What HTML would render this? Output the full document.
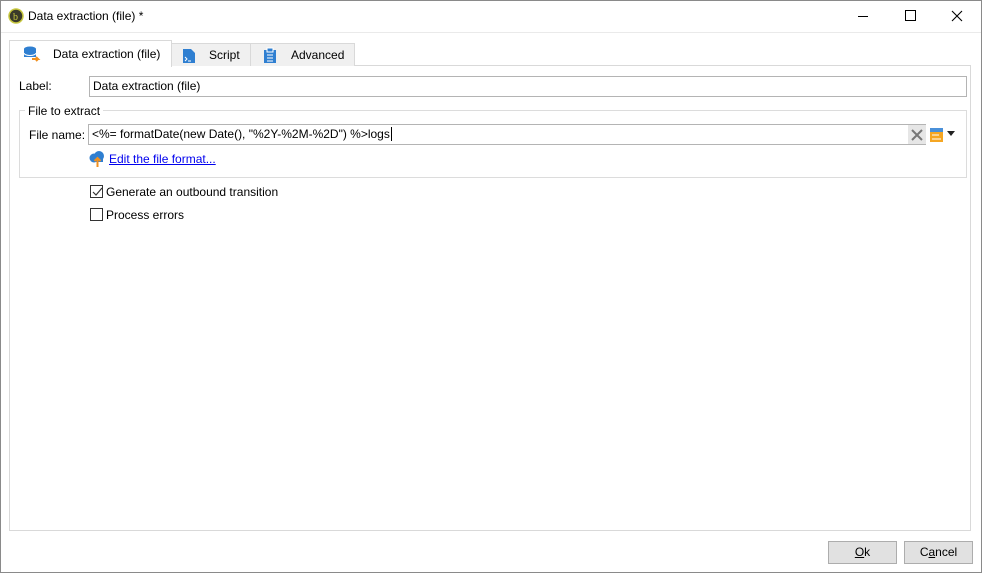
<!DOCTYPE html>
<html><head><meta charset="utf-8"><style>
*{margin:0;padding:0;box-sizing:border-box}
body{width:982px;height:573px;background:#fff;font-family:"Liberation Sans",Arial,sans-serif;font-size:12px;color:#000;position:relative;overflow:hidden}
.abs{position:absolute}
.win{left:0;top:0;width:982px;height:573px;border:1px solid #8a8a8a;border-top-color:#8a8a8a}
.title{left:28px;top:9px;font-size:12px}
.sep{left:1px;top:32px;width:980px;height:1px;background:#eaeaea}
.panel{left:9px;top:65px;width:962px;height:466px;border:1px solid #d9d9d9;background:#fff}
.tab{top:43px;height:23px;background:#f0f0f0;border:1px solid #d9d9d9;border-bottom:none;font-size:12px;line-height:21px}
.tab.act{top:40px;height:27px;background:#fff;z-index:2}
.inp{height:21px;border:1px solid #b4b4b4;background:#fff;line-height:19px;padding-left:3px}
.group{left:19px;top:110px;width:948px;height:68px;border:1px solid #dcdcdc}
.cb{width:13px;height:13px;border:1px solid #333;background:#fff}
.btn{top:541px;height:23px;width:69px;background:#e1e1e1;border:1px solid #adadad;text-align:center;line-height:21px}
</style></head><body>
<div class="abs win"></div>
<svg class="abs" style="left:8px;top:8px" width="16" height="16"><circle cx="8" cy="8" r="7" fill="#3a3a2a" stroke="#c8c840" stroke-width="1.5"/><text x="5" y="12" font-size="10" fill="#c8c840" font-family="Liberation Serif">b</text></svg>
<div class="abs title">Data extraction (file) *</div>
<div class="abs" style="left:858px;top:16px;width:10px;height:1px;background:#000"></div>
<div class="abs" style="left:905px;top:10px;width:11px;height:11px;border:1px solid #000"></div>
<svg class="abs" style="left:951px;top:10px" width="12" height="12"><path d="M1 1L11 11M11 1L1 11" stroke="#000" stroke-width="1.1"/></svg>
<div class="abs sep"></div>
<div class="abs panel"></div>
<div class="abs tab act" style="left:9px;width:163px;">
<svg class="abs" style="left:13px;top:4px" width="18" height="18"><ellipse cx="7" cy="4" rx="6" ry="2.5" fill="#2f7fd1"/><rect x="1" y="4" width="12" height="8" fill="#2f7fd1"/><path d="M1 8a6 2.5 0 0 0 12 0" stroke="#fff" fill="none"/><path d="M9 14h6l-2-2m2 2l-2 2" stroke="#f09020" stroke-width="2" fill="none"/></svg>
<span class="abs" style="left:43px;top:3px">Data extraction (file)</span></div>
<div class="abs tab" style="left:171px;width:80px;">
<svg class="abs" style="left:10px;top:4px" width="14" height="16"><path d="M1 1h8l4 4v10H1z" fill="#2f7fd1"/><path d="M3 9l2 2-2 2M6 13h3" stroke="#fff" fill="none"/></svg>
<span class="abs" style="left:37px;top:1px">Script</span></div>
<div class="abs tab" style="left:250px;width:105px;">
<svg class="abs" style="left:12px;top:3px" width="14" height="17"><rect x="1" y="3" width="12" height="13" fill="#2f7fd1"/><rect x="4" y="1" width="6" height="4" fill="#2f7fd1" stroke="#fff"/><path d="M4 8h6M4 11h6M4 14h6" stroke="#fff"/></svg>
<span class="abs" style="left:40px;top:1px">Advanced</span></div>
<div class="abs" style="left:19px;top:79px">Label:</div>
<div class="abs inp" style="left:89px;top:76px;width:878px">Data extraction (file)</div>
<div class="abs group"></div>
<div class="abs" style="left:25px;top:104px;background:#fff;padding:0 3px">File to extract</div>
<div class="abs" style="left:29px;top:128px">File name:</div>
<div class="abs inp" style="left:88px;top:124px;width:838px">&lt;%= formatDate(new Date(), "%2Y-%2M-%2D") %&gt;logs<span style="border-left:1px solid #000;margin-left:1px"></span></div>
<div class="abs" style="left:908px;top:125px;width:18px;height:19px;background:#e6e6e6"></div>
<svg class="abs" style="left:910px;top:128px" width="14" height="14"><path d="M2 2L12 12M12 2L2 12" stroke="#777" stroke-width="2"/></svg>
<svg class="abs" style="left:929px;top:127px" width="16" height="16"><rect x="1" y="1" width="13" height="4" fill="#4a90d9"/><rect x="1" y="5" width="13" height="10" fill="#f5a623"/><path d="M3 8h7M3 12h9" stroke="#fff"/></svg>
<svg class="abs" style="left:947px;top:131px" width="8" height="5"><path d="M0 0h8L4 5z" fill="#222"/></svg>
<svg class="abs" style="left:88px;top:150px" width="18" height="18"><circle cx="6" cy="8" r="4.5" fill="#2f7fd1"/><circle cx="11" cy="6" r="5" fill="#2f7fd1"/><rect x="4" y="7" width="11" height="5" fill="#2f7fd1"/><path d="M9.5 17V8M6.5 11l3-3 3 3" stroke="#f09020" stroke-width="2" fill="none"/></svg>
<div class="abs" style="left:109px;top:152px;color:#0000ee;text-decoration:underline">Edit the file format...</div>
<div class="abs cb" style="left:90px;top:185px"></div>
<svg class="abs" style="left:91px;top:186px" width="12" height="12"><path d="M2 6l3 3 6-7" stroke="#333" stroke-width="1.2" fill="none"/></svg>
<div class="abs" style="left:106px;top:185px">Generate an outbound transition</div>
<div class="abs cb" style="left:90px;top:208px"></div>
<div class="abs" style="left:106px;top:208px">Process errors</div>
<div class="abs btn" style="left:828px"><u>O</u>k</div>
<div class="abs btn" style="left:904px">C<u>a</u>ncel</div>
</body></html>
